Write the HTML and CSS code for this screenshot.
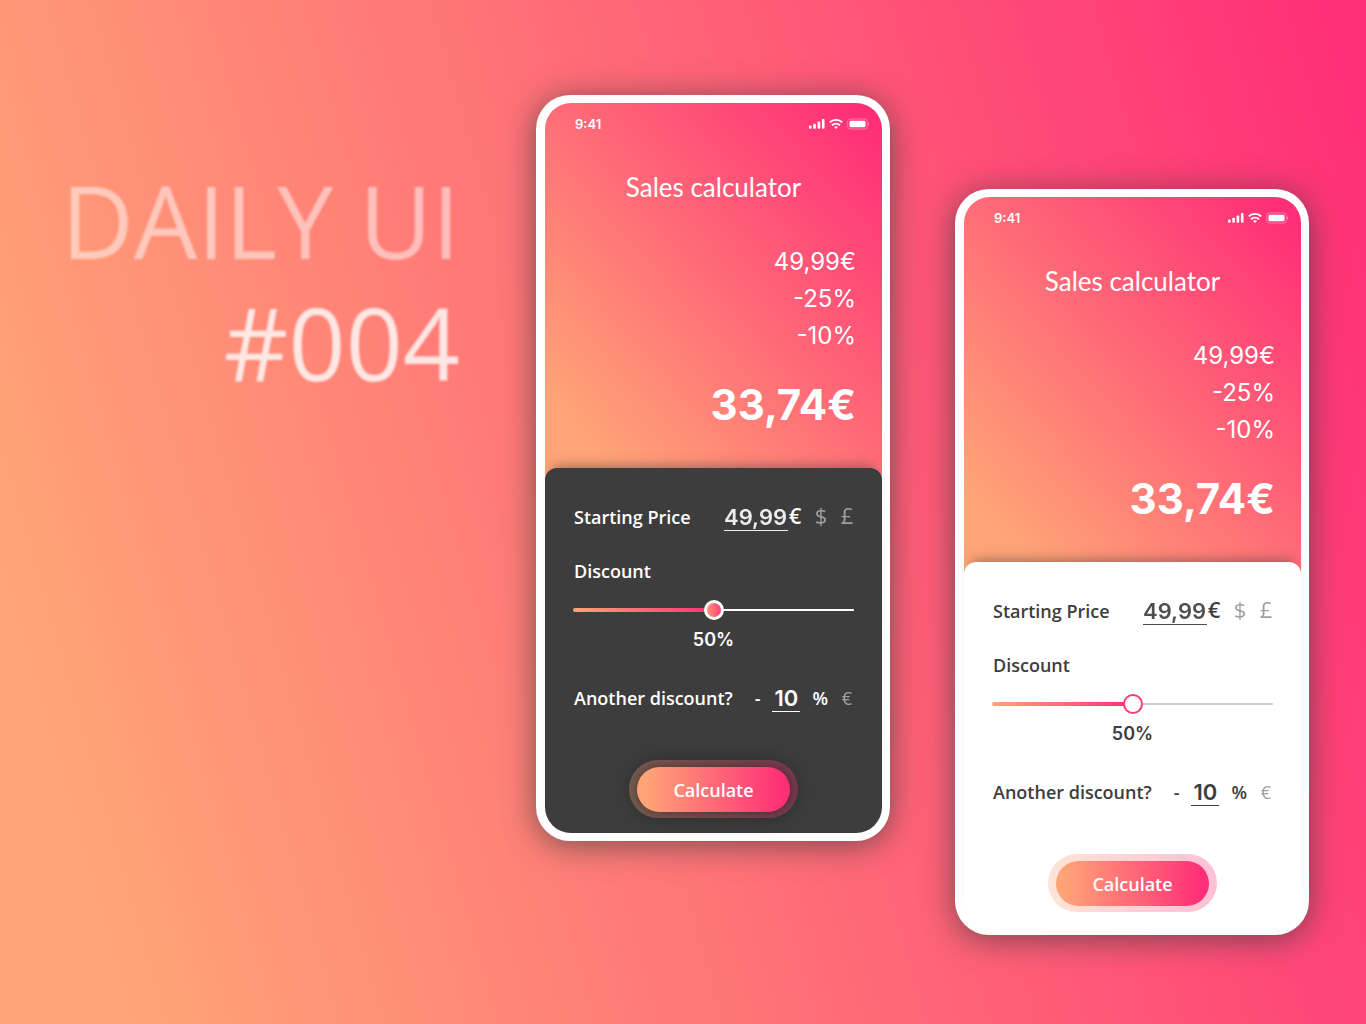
FILE: index.html
```html
<!DOCTYPE html>
<html lang="en">
<head>
  <meta charset="UTF-8">
  <title>Sales calculator</title>
  <meta name="viewport" content="width=device-width, initial-scale=1.0">
  <link rel="stylesheet" href="styles.css">
</head>
<body>
  <!-- Status bar icons, shared by both phones -->
  <svg class="sprite" width="0" height="0" aria-hidden="true">
    <symbol id="status-icons" viewBox="0 0 60 12">
      <g fill="#fff">
        <rect x="0" y="7.500" width="2.600" height="3.300" rx=".8"/>
        <rect x="4.300" y="5.800" width="2.600" height="5" rx=".8"/>
        <rect x="8.600" y="3.500" width="2.600" height="7.300" rx=".8"/>
        <rect x="12.900" y="1" width="2.600" height="9.800" rx=".8"/>
        <path d="M27 8.200a2.600 2.600 0 0 1 1.900.8L27 11l-1.900-2a2.600 2.600 0 0 1 1.900-.8z"/>
        <rect x="40.500" y="2.700" width="16" height="6.600" rx="1.300"/>
      </g>
      <g fill="none" stroke="#fff" stroke-width="1.900">
        <path d="M20.700 4.400a9 9 0 0 1 12.600 0"/>
        <path d="M23 7.200a5.800 5.800 0 0 1 8 0"/>
      </g>
      <rect x="38.700" y="1" width="19.600" height="10" rx="2.500" fill="none" stroke="#fff" stroke-opacity=".35"/>
      <path d="M59.200 4.500v3a1.600 1.600 0 0 0 0-3z" fill="#fff" fill-opacity=".5"/>
    </symbol>
  </svg>

  <div class="page">
    <h1 class="hero">
      <span class="hero-name">DAILY UI</span>
      <span class="hero-number">#004</span>
    </h1>

    <section class="phone dark">
      <header class="result">
        <div class="status">
          <span>9:41</span>
          <svg class="status-icons" aria-hidden="true"><use href="#status-icons"/></svg>
        </div>
        <h2>Sales calculator</h2>
        <p class="line">49,99€</p>
        <p class="line">-25%</p>
        <p class="line">-10%</p>
        <p class="total">33,74€</p>
      </header>
      <form class="panel">
        <div class="row">
          <label for="price-dark">Starting Price</label>
          <input class="price" id="price-dark" type="text" value="49,99">
          <div class="units units-price">
            <button type="button" class="active">€</button>
            <button type="button">$</button>
            <button type="button">£</button>
          </div>
        </div>
        <label class="discount" for="discount-dark">Discount</label>
        <input class="slider" id="discount-dark" type="range" min="0" max="100" value="50">
        <output for="discount-dark">50%</output>
        <div class="row row-extra">
          <label for="extra-dark">Another discount?</label>
          <span class="minus">-</span>
          <input class="extra" id="extra-dark" type="text" value="10">
          <div class="units">
            <button type="button" class="active">%</button>
            <button type="button">€</button>
          </div>
        </div>
        <div class="ring">
          <button type="button" class="calculate">Calculate</button>
        </div>
      </form>
    </section>

    <section class="phone light">
      <header class="result">
        <div class="status">
          <span>9:41</span>
          <svg class="status-icons" aria-hidden="true"><use href="#status-icons"/></svg>
        </div>
        <h2>Sales calculator</h2>
        <p class="line">49,99€</p>
        <p class="line">-25%</p>
        <p class="line">-10%</p>
        <p class="total">33,74€</p>
      </header>
      <form class="panel">
        <div class="row">
          <label for="price-light">Starting Price</label>
          <input class="price" id="price-light" type="text" value="49,99">
          <div class="units units-price">
            <button type="button" class="active">€</button>
            <button type="button">$</button>
            <button type="button">£</button>
          </div>
        </div>
        <label class="discount" for="discount-light">Discount</label>
        <input class="slider" id="discount-light" type="range" min="0" max="100" value="50">
        <output for="discount-light">50%</output>
        <div class="row row-extra">
          <label for="extra-light">Another discount?</label>
          <span class="minus">-</span>
          <input class="extra" id="extra-light" type="text" value="10">
          <div class="units">
            <button type="button" class="active">%</button>
            <button type="button">€</button>
          </div>
        </div>
        <div class="ring">
          <button type="button" class="calculate">Calculate</button>
        </div>
      </form>
    </section>
  </div>
</body>
</html>
```

FILE: styles.css
```css
* { box-sizing: border-box; }
body { margin: 0; font-family: "Open Sans", sans-serif; background: #ff6a79; }
h1, h2, p { margin: 0; font-weight: 400; }
button, input { margin: 0; padding: 0; border: none; background: none; font-family: inherit; color: inherit; }
button { cursor: pointer; }
.sprite { position: absolute; }

.page {
  display: flex;
  align-items: flex-start;
  min-height: 100vh;
  padding: 95px 57px 88px 20px;
  background: linear-gradient(74deg, #ffa477 8%, #ff2f77 98%);
}

/* Title */
.hero { flex: 1; margin: 64px 76px 0 0; font-size: 100px; line-height: 122px; text-align: right; white-space: nowrap; filter: blur(1px); }
.hero span { display: block; }
.hero-name { color: rgba(255, 255, 255, 0.5); }
.hero-number { color: rgba(255, 255, 255, 0.8); }

/* Phone */
.phone { flex: 0 1 354px; padding: 8px 8px 8px 9px; background: white; border-radius: 34px; box-shadow: 0 4px 32px rgba(61, 61, 61, 0.7); }
.light { margin: 94px 0 0 65px; }

.result {
  padding: 0 26px 50px;
  border-radius: 26px 26px 0 0;
  background: linear-gradient(48deg, #ffa477 11%, #ff2f77 95%);
  color: white;
  font-family: Inter, sans-serif;
}
.status { display: flex; justify-content: space-between; align-items: center; height: 42px; margin: 0 -13px 0 4px; font-size: 13px; font-weight: 600; }
.status-icons { width: 60px; height: 12px; }
.result h2 { margin: 24px 0 38px; font-family: Lato, sans-serif; font-size: 26px; line-height: 36px; text-align: center; }
.line { font-size: 24px; line-height: 37px; text-align: right; }
.total { margin-top: 26px; font-size: 42px; font-weight: 700; line-height: 50px; text-align: right; }

/* Form */
.panel { display: flex; flex-direction: column; margin-top: -12px; padding: 33px 28px 15px; border-radius: 12px 12px 26px 26px; box-shadow: 0 -10px 12px -8px rgba(61, 61, 61, 0.5); font-size: 18px; font-weight: 600; }
.dark .panel { background: #3d3d3d; color: white; }
.light .panel { background: white; color: #3d3d3d; }

.row { display: flex; align-items: center; height: 32px; }
.row label { flex: 1; white-space: nowrap; }
.panel label { padding-left: 1px; }
.row input { height: 28px; border-bottom: 1px solid; text-align: center; font-family: Inter, sans-serif; font-size: 22px; font-weight: 600; }
.row .price { width: 64px; opacity: 0.9; text-align: left; }
.row .extra { width: 28px; margin: 0 12px; }
.row-extra { margin-top: 30px; }
.units { display: flex; gap: 12px; }
.units button { min-width: 14px; font-size: 18px; opacity: 0.5; }
.units .active { font-weight: 600; opacity: 1; }
.units-price { padding-bottom: 4px; }
.units-price button { font-size: 22px; }
.discount { margin-top: 26px; line-height: 24px; }
.panel output { margin-top: 8px; line-height: 24px; text-align: center; font-family: Inter, sans-serif; }

.slider { -webkit-appearance: none; appearance: none; width: 100%; height: 20px; margin-top: 17px; }
.slider::-webkit-slider-runnable-track {
  height: 4px;
  border-radius: 2px;
  background:
    linear-gradient(90deg, #ffa477, #ff2f77) left center / 50% 4px no-repeat,
    linear-gradient(white, white) center / 100% 2px no-repeat;
}
.slider::-webkit-slider-thumb { -webkit-appearance: none; width: 20px; height: 20px; margin-top: -8px; border: 3px solid white; border-radius: 50%; background: linear-gradient(90deg, #ffa477, #ff2f77) border-box; }
.light .slider::-webkit-slider-runnable-track {
  background:
    linear-gradient(90deg, #ffa477, #ff2f77) left center / 50% 4px no-repeat,
    linear-gradient(#d0d0d0, #d0d0d0) center / 100% 2px no-repeat;
}
.light .slider::-webkit-slider-thumb { border: 2px solid #ff3a77; background: white; }

/* Calculate button with its translucent ring */
.ring { align-self: center; margin-top: 46px; padding: 7px 8px 6px; border-radius: 29px; background: linear-gradient(90deg, rgba(255, 164, 119, 0.3), rgba(255, 47, 119, 0.3)); }
.dark .ring { box-shadow: 0 0 24px rgba(0, 0, 0, 0.2); }
.calculate { display: block; width: 153px; height: 45px; border-radius: 23px; background: linear-gradient(90deg, #ffa477 5%, #ff2f77 95%); color: white; font-size: 18px; font-weight: 600; }
.dark .calculate { box-shadow: 0 0 12px rgba(0, 0, 0, 0.4); }
```
